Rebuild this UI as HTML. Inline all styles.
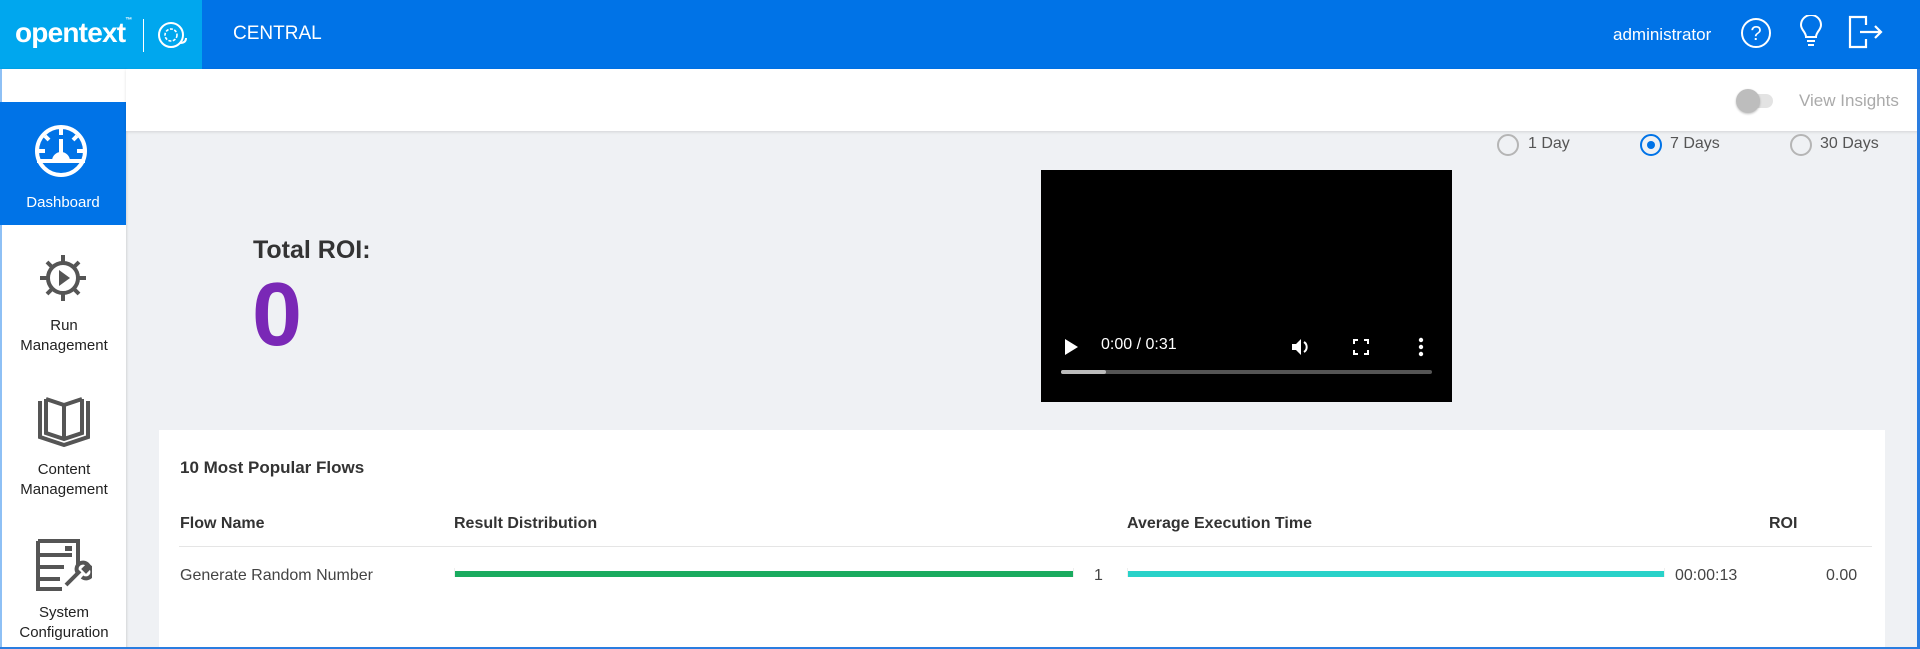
<!DOCTYPE html>
<html style="width:1920px;height:649px;overflow:hidden"><head><meta charset="utf-8"><style>
*{box-sizing:border-box;margin:0;padding:0}
body{width:1920px;height:649px;overflow:hidden;background:#eff1f4;font-family:"Liberation Sans",sans-serif;position:relative}
.abs{position:absolute}
#hdr{left:0;top:0;width:1920px;height:69px;background:#0073e7}
#logo{left:0;top:0;width:202px;height:69px;background:#00a7ee}
#side{left:0;top:69px;width:126px;height:580px;background:#fff;border-left:2px solid #8ec0f5;box-shadow:1px 0 2px rgba(0,0,0,.12)}
#topbar{left:126px;top:69px;width:1794px;height:62px;background:#fff;box-shadow:0 1px 3px rgba(0,0,0,.12)}
.nav{position:absolute;left:0;width:124px;text-align:center;font-size:15px;color:#222;line-height:20px}
.radio{position:absolute;top:134px;width:22px;height:22px;border-radius:50%;border:2px solid #b5b5b5}
.rl{position:absolute;top:135px;font-size:16px;color:#555}
.th{position:absolute;top:515px;font-size:16px;font-weight:bold;color:#333}
.td{position:absolute;top:567px;font-size:16px;color:#444}
</style></head><body>
<div id="hdr" class="abs"></div>
<div id="logo" class="abs">
 <div class="abs" style="left:15px;top:17px;color:#fff;font-weight:bold;font-size:28px;letter-spacing:-0.8px">opentext<span style="font-size:7px;vertical-align:top">™</span></div>
 <div class="abs" style="left:143px;top:19px;width:1px;height:33px;background:#fff"></div>
 <svg class="abs" style="left:157px;top:20px" width="32" height="30" viewBox="0 0 32 30"><circle cx="14" cy="15" r="12" fill="none" stroke="#fff" stroke-width="2"/><circle cx="14" cy="15" r="6" fill="none" stroke="#fff" stroke-width="1.6" stroke-dasharray="3 1.5"/><path d="M23 23 q6 0 6 -5" fill="none" stroke="#fff" stroke-width="2"/></svg>
</div>
<div class="abs" style="left:233px;top:23px;color:#fff;font-size:19px">CENTRAL</div>
<div class="abs" style="left:1613px;top:25px;color:#fff;font-size:17px">administrator</div>
<svg class="abs" style="left:1740px;top:17px" width="32" height="32" viewBox="0 0 32 32"><circle cx="16" cy="16" r="14" fill="none" stroke="#fff" stroke-width="2"/><text x="16" y="23" text-anchor="middle" fill="#fff" font-size="20" font-family="Liberation Sans">?</text></svg>
<svg class="abs" style="left:1799px;top:15px" width="24" height="34" viewBox="0 0 24 34"><path d="M7 22 C7 17 2 15 2 10 A10 10 0 0 1 22 10 C22 15 17 17 17 22 Z M8 26 H16 M9 30 H15" fill="none" stroke="#fff" stroke-width="2"/></svg>
<svg class="abs" style="left:1848px;top:15px" width="36" height="34" viewBox="0 0 36 34"><path d="M18 10 V2 H2 V32 H18 V24 M12 17 H33 M27 11 L33 17 L27 23" fill="none" stroke="#fff" stroke-width="2.2"/></svg>

<div id="side" class="abs">
 <div class="abs" style="left:-2px;top:33px;width:126px;height:123px;background:#0073e7"></div>
 <svg class="abs" style="left:29px;top:54px" width="60" height="56" viewBox="0 0 60 56"><circle cx="30" cy="28" r="24" fill="none" stroke="#fff" stroke-width="4"/><path d="M30 6 V12 M8 28 H14 M46 28 H52 M14 13 L18 17 M46 13 L42 17 M30 16 V34 M23 38 A7 7 0 0 1 37 38 Z M6 38 H54" stroke="#fff" stroke-width="4" fill="#fff"/></svg>
 <div class="nav" style="top:124px;color:#fff;left:-2px;width:126px">Dashboard</div>
 <svg class="abs" style="left:34px;top:182px" width="54" height="54" viewBox="0 0 54 54"><circle cx="27" cy="27" r="15" fill="none" stroke="#555" stroke-width="4"/><path d="M27 4 V12 M27 42 V50 M4 27 H12 M42 27 H50 M11 11 L16 16 M43 11 L38 16 M11 43 L16 38 M43 43 L38 38" stroke="#555" stroke-width="4"/><path d="M23 19 L34 27 L23 35 Z" fill="#555"/></svg>
 <div class="nav" style="top:247px">Run<br>Management</div>
 <svg class="abs" style="left:35px;top:324px" width="54" height="54" viewBox="0 0 54 54"><path d="M3 8 V44 L27 52 L51 44 V8 M9 6 L27 12 L45 6 M9 6 V40 L27 46 L45 40 V6 M27 12 V46" fill="none" stroke="#555" stroke-width="4"/></svg>
 <div class="nav" style="top:391px">Content<br>Management</div>
 <svg class="abs" style="left:34px;top:470px" width="56" height="54" viewBox="0 0 56 54"><path d="M2 2 H42 V26 M2 2 V50 H26 M2 16 H36 M2 28 H28 M2 40 H24" fill="none" stroke="#555" stroke-width="4"/><rect x="29" y="7" width="7" height="5" fill="#555"/><path d="M30 46 L44 32 M42 34 A6 6 0 0 1 52 26 L48 30 L50 32 L54 28 A6 6 0 0 1 46 38" stroke="#555" stroke-width="4" fill="none"/></svg>
 <div class="nav" style="top:534px">System<br>Configuration</div>
</div>

<div id="topbar" class="abs"></div>
<div class="abs" style="left:1739px;top:94px;width:34px;height:14px;border-radius:7px;background:#e3e3e3"></div>
<div class="abs" style="left:1736px;top:89px;width:24px;height:24px;border-radius:50%;background:#bdbdbd;box-shadow:0 1px 2px rgba(0,0,0,.25)"></div>
<div class="abs" style="left:1799px;top:91px;font-size:17px;color:#aaa">View Insights</div>

<div class="radio" style="left:1497px"></div><div class="rl" style="left:1528px">1 Day</div>
<div class="radio" style="left:1640px;border-color:#0073e7"><div style="position:absolute;left:5px;top:5px;width:8px;height:8px;border-radius:50%;background:#0073e7"></div></div><div class="rl" style="left:1670px">7 Days</div>
<div class="radio" style="left:1790px"></div><div class="rl" style="left:1820px">30 Days</div>

<div class="abs" style="left:253px;top:236px;font-size:25px;font-weight:bold;color:#333">Total ROI:</div>
<div class="abs" style="left:252px;top:265px;font-size:90px;font-weight:bold;color:#7a28b6;line-height:100px">0</div>

<div class="abs" style="left:1041px;top:170px;width:411px;height:232px;background:#000">
 <svg class="abs" style="left:24px;top:169px" width="14" height="16"><path d="M0 0 L13 8 L0 16Z" fill="#fff"/></svg>
 <div class="abs" style="left:60px;top:166px;color:#fff;font-size:16px">0:00 / 0:31</div>
 <svg class="abs" style="left:250px;top:167px" width="20" height="20" viewBox="0 0 20 20"><path d="M1 7 H5 L10 2 V18 L5 13 H1Z" fill="#fff"/><path d="M13 5 A6 6 0 0 1 13 15" fill="none" stroke="#fff" stroke-width="2"/></svg>
 <svg class="abs" style="left:312px;top:169px" width="16" height="16"><path d="M1 5 V1 H5 M11 1 H15 V5 M15 11 V15 H11 M5 15 H1 V11" fill="none" stroke="#fff" stroke-width="2"/></svg>
 <svg class="abs" style="left:377px;top:167px" width="6" height="20"><circle cx="3" cy="3" r="2.2" fill="#fff"/><circle cx="3" cy="10" r="2.2" fill="#fff"/><circle cx="3" cy="17" r="2.2" fill="#fff"/></svg>
 <div class="abs" style="left:20px;top:200px;width:371px;height:4px;border-radius:2px;background:#555"><div style="width:45px;height:4px;border-radius:2px;background:#bbb"></div></div>
</div>

<div class="abs" style="left:159px;top:430px;width:1726px;height:219px;background:#fff"></div>
<div class="abs" style="left:180px;top:458px;font-size:17px;font-weight:bold;color:#333">10 Most Popular Flows</div>
<div class="th" style="left:180px">Flow Name</div>
<div class="th" style="left:454px">Result Distribution</div>
<div class="th" style="left:1127px">Average Execution Time</div>
<div class="th" style="left:1769px">ROI</div>
<div class="abs" style="left:179px;top:546px;width:1693px;height:1px;background:#e5e5e5"></div>
<div class="td" style="left:180px">Generate Random Number</div>
<div class="abs" style="left:454px;top:568px;width:620px;height:9px;border-left:1px solid #eee;border-right:1px solid #eee"><div style="margin-top:3px;height:6px;background:#1aab5f"></div></div>
<div class="td" style="left:1094px">1</div>
<div class="abs" style="left:1127px;top:568px;width:538px;height:9px;border-left:1px solid #eee;border-right:1px solid #eee"><div style="margin-top:3px;height:6px;background:#29d2c9"></div></div>
<div class="td" style="left:1675px">00:00:13</div>
<div class="td" style="left:1826px">0.00</div>
<div class="abs" style="left:1917px;top:69px;width:3px;height:580px;background:#2a7de0"></div>
<div class="abs" style="left:0;top:647px;width:1920px;height:2px;background:#2a7de0"></div>
</body></html>
